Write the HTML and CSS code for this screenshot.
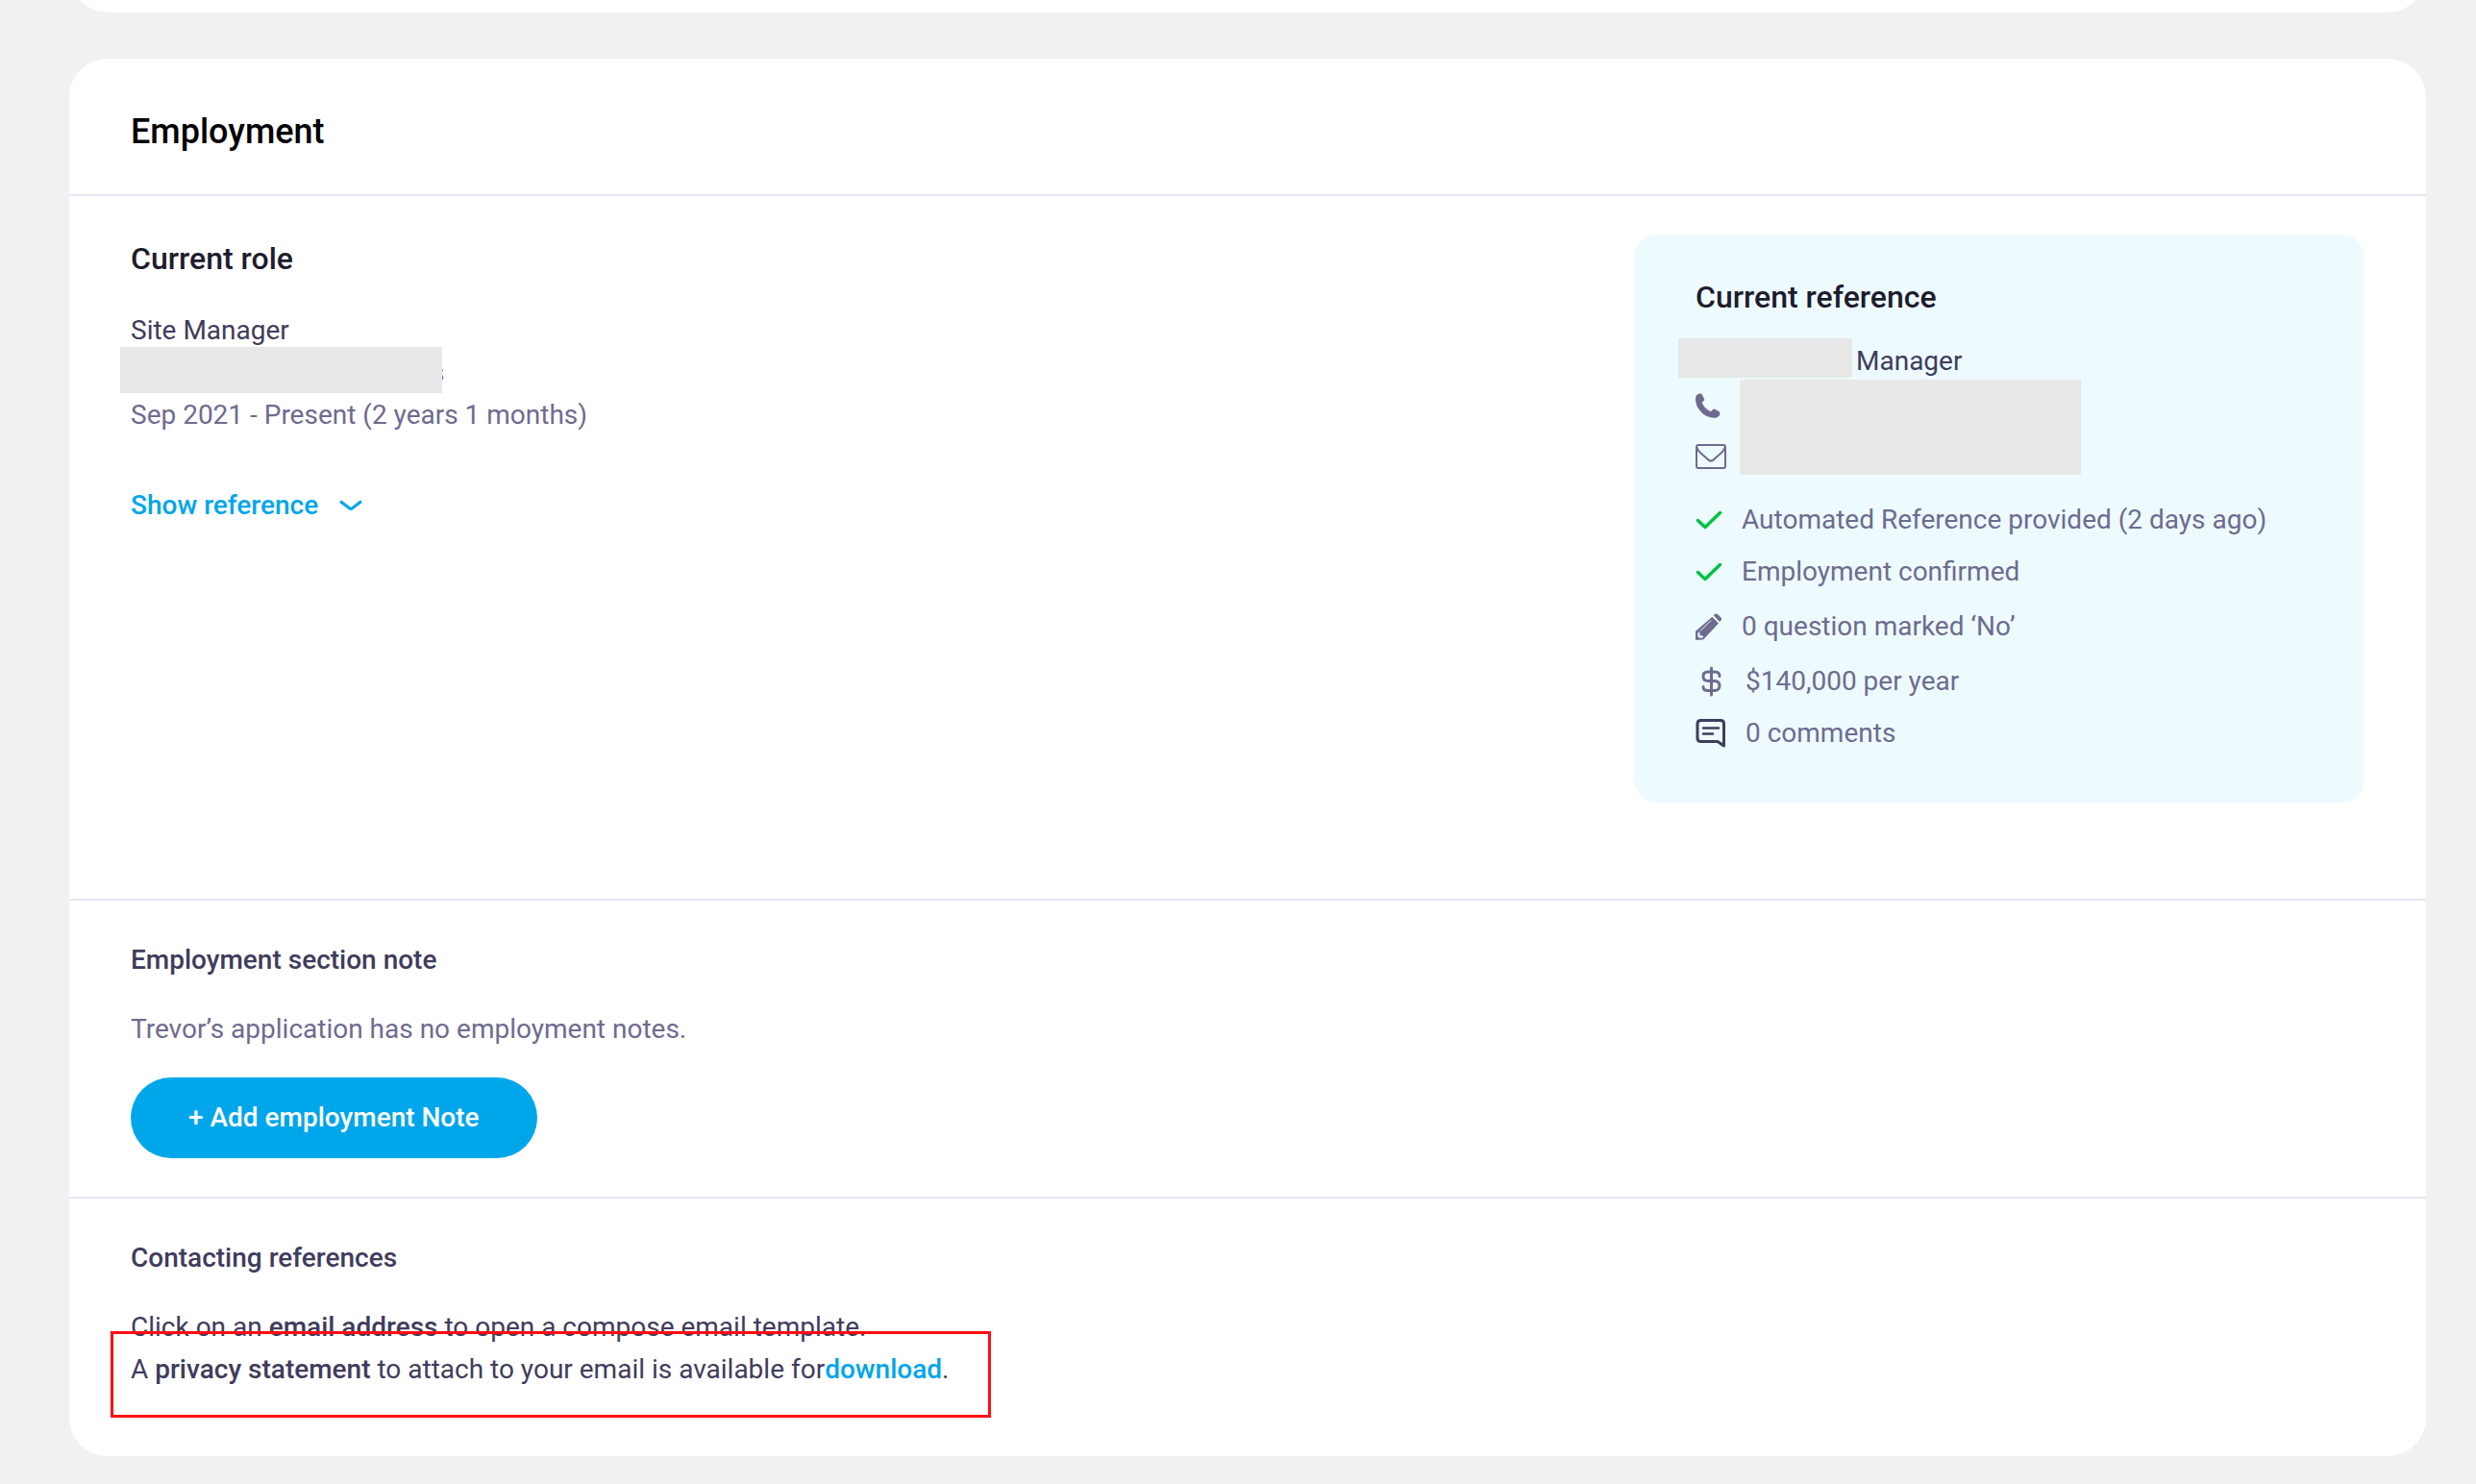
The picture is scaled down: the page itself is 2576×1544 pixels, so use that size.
FILE: index.html
```html
<!DOCTYPE html>
<html lang="en">
<head>
<meta charset="utf-8">
<title>Employment</title>
<link rel="stylesheet" href="styles.css">
</head>
<body>
<main class="page">
  <div class="card card-previous"></div>
  <article class="card">
    <header class="card-header"><h1>Employment</h1></header>

    <section class="section roles">
      <div class="role">
        <h2>Current role</h2>
        <p class="strong-line">Site Manager</p>
        <p class="company"><span class="redacted redacted-company"></span><span class="company-end">s</span></p>
        <p>Sep 2021 - Present (2 years 1 months)</p>
        <button class="toggle" type="button">Show reference
          <svg width="24" height="16" viewBox="0 0 24 16" aria-hidden="true"><path d="M1 3.500L10.800 11Q12 11.900 13.200 11L23 3.500" /></svg>
        </button>
      </div>

      <aside class="reference">
        <h2>Current reference</h2>
        <p class="referee"><span class="redacted redacted-name"></span>Manager</p>
        <div class="contact">
          <div class="contact-icons">
            <svg class="icon" width="26" height="26" viewBox="0 0 26 26" aria-hidden="true"><path fill="currentColor" d="M4.600.6C2 .6 0 3 0 6.200C0 16.500 9.500 25.700 19.300 25.700C22.800 25.700 25.400 23.600 25.400 21.200C25.400 20.200 25 19.600 24.300 19.100L20 16.800C19.200 16.400 18.400 16.500 17.800 17.200L16 19.300C11.800 17.500 8.200 14 6.600 9.800L8.600 8.100C9.300 7.500 9.400 6.700 9 5.900L6.900 1.700C6.400 .9 5.700.6 4.600.6Z"/></svg>
            <svg class="icon" width="32" height="26" viewBox="0 0 32 26" fill="none" stroke="currentColor" stroke-width="2" aria-hidden="true"><rect x="1" y="1" width="30" height="24" rx="2"/><path d="M1.500 3.500C2 6 3 7.500 5 9L13.500 16.500Q16 18.700 18.500 16.500L27 9C29 7.500 30 6 30.500 3.500"/></svg>
          </div>
          <span class="redacted redacted-contact"></span>
        </div>
        <ul class="facts">
          <li><svg class="icon check" width="28" height="20" viewBox="0 0 28 20" aria-hidden="true"><path stroke-width="3.500" d="M2.500 10.500L10 17.500L25.500 2.500"/></svg>Automated Reference provided (2 days ago)</li>
          <li><svg class="icon check" width="28" height="20" viewBox="0 0 28 20" aria-hidden="true"><path stroke-width="3.500" d="M2.500 10.500L10 17.500L25.500 2.500"/></svg>Employment confirmed</li>
          <li class="questions"><svg class="icon" width="28" height="28" viewBox="0 0 28 28" aria-hidden="true"><path fill="currentColor" d="M18.800 2.200L20 1Q21.500-.2 23 1L26.500 4.500Q27.700 6 26.500 7.500L25 9ZM17.300 3.800L24 10.600L8 27.500H0V18.800Z"/><path fill="none" stroke="#edfbff" stroke-width="1" d="M5 18.500L16 7.500"/><path fill="#edfbff" d="M2.500 19.500L4.500 20V23L8 23.500L8 25L6.500 26L2 25.500Z" opacity=".9"/><path fill="currentColor" d="M0 27.500V22L5.500 27.500Z"/></svg>0 question marked ‘No’</li>
          <li class="wide"><svg class="icon" width="32" height="32" viewBox="0 0 32 32" fill="none" stroke="currentColor" stroke-width="3" stroke-linecap="round" aria-hidden="true"><path d="M16.500 2V30M25 10.500C25 7.500 23 6 20 6H13C10 6 8 7.800 8 10.800C8 13.800 10 15.500 13 15.500H20C23 15.500 25 17.500 25 20.500C25 23.500 23 25.500 20 25.500H13C10 25.500 8 24 8 21.500"/></svg>$140,000 per year</li>
          <li class="wide"><svg class="icon comment" width="32" height="32" viewBox="0 0 32 32" fill="none" stroke="currentColor" stroke-width="3" stroke-linecap="round" stroke-linejoin="round" aria-hidden="true"><path d="M5.500 2.500H26Q29.500 2.500 29.500 6V29L23 24.500H5.500Q2 24.500 2 21V6Q2 2.500 5.500 2.500Z"/><path stroke-width="2.500" d="M8 10.500H24M8 16.500H18"/></svg>0 comments</li>
        </ul>
      </aside>
    </section>

    <section class="section notes">
      <h3>Employment section note</h3>
      <p>Trevor’s application has no employment notes.</p>
      <button class="primary" type="button">+ Add employment Note</button>
    </section>

    <section class="section contacting">
      <h3>Contacting references</h3>
      <p>Click on an <strong>email address</strong> to open a compose email template.</p>
      <p class="privacy">A <strong>privacy statement</strong> to attach to your email is available for<a href="#download">download</a>.<span class="highlight"></span></p>
    </section>
  </article>
</main>
</body>
</html>
```
FILE: styles.css
```css
* { box-sizing: border-box; }

body {
  margin: 0;
  background: #f0f1f3;
  color: #6e6b8f;
  font-family: Roboto, "Liberation Sans", sans-serif;
  font-size: 28px;
  line-height: 44px;
}

h1, h2, h3, p, ul { margin: 0; padding: 0; }
h1, h2, h3 { font-weight: 500; }
button { font: inherit; border: 0; cursor: pointer; }
svg { display: block; flex: none; }

.page {
  display: flex;
  flex-direction: column;
  gap: 48px;
  padding: 0 52px 29px 72px;
}

.card {
  background: #fff;
  border-radius: 40px;
}

.card-previous {
  height: 80px;
  margin-top: -67px;
}

.card-header {
  padding: 49px 64px 38px;
}

h1 {
  color: #000;
  font-size: 36px;
  line-height: 54px;
}

h2 {
  color: #1e1c2c;
  font-size: 32px;
  line-height: 50px;
}

h3 {
  margin-bottom: 28px;
  color: #3f3c5c;
  font-size: 28px;
}

.section {
  border-top: 2px solid #e3e8f3;
  padding: 40px 64px;
}

.roles {
  display: flex;
  align-items: flex-start;
  justify-content: space-between;
  padding-bottom: 100px;
}

.role h2 { margin-bottom: 28px; }

.strong-line, .referee, .contacting { color: #3f3c5c; }

.redacted {
  display: block;
  flex: none;
  background: #e8e8e8;
}

.company {
  display: flex;
  align-items: flex-start;
  height: 44px;
}

.redacted-company {
  position: relative;
  width: 335px;
  height: 48px;
  margin: -5px 0 0 -11px;
}

.company-end { margin-left: -12px; }

.toggle {
  display: flex;
  align-items: center;
  gap: 22px;
  margin-top: 50px;
  padding: 0;
  background: none;
  color: #00a6ea;
  font-weight: 500;
}

.toggle path {
  fill: none;
  stroke: currentColor;
  stroke-width: 3;
}

.reference {
  width: 760px;
  padding: 40px 64px 45px;
  border-radius: 24px;
  background: #edfbff;
}

.referee {
  display: flex;
  gap: 4px;
  margin-top: 22px;
  line-height: 40px;
}

.redacted-name {
  width: 181px;
  height: 41px;
  margin: -4px 0 0 -18px;
}

.contact {
  display: flex;
  height: 104px;
  margin-bottom: 14px;
}

.contact-icons {
  display: flex;
  flex-direction: column;
  gap: 27px;
  width: 46px;
  padding-top: 13px;
}

.redacted-contact {
  width: 355px;
  height: 99px;
  margin-top: -1px;
}

.facts { list-style: none; }

.facts li {
  display: flex;
  align-items: center;
  gap: 20px;
  height: 54px;
}

.facts .questions { height: 60px; }

.check path {
  fill: none;
  stroke: #00c244;
  stroke-linecap: round;
  stroke-linejoin: round;
}

.comment { color: #3f3c5c; }

.primary {
  height: 84px;
  margin-top: 28px;
  padding: 0 60px;
  border-radius: 42px;
  background: #00a6ea;
  color: #fff;
  font-weight: 500;
}

.contacting { padding-bottom: 68px; }
.contacting strong { font-weight: 500; }

.privacy {
  position: relative;
  width: fit-content;
}

.privacy a {
  color: #00a6ea;
  font-weight: 500;
  text-decoration: none;
}

/* Red frame drawn over the privacy line */
.highlight {
  position: absolute;
  top: -18px;
  left: -21px;
  width: 916px;
  height: 90px;
  border: 3px solid #ff0d12;
}
```
